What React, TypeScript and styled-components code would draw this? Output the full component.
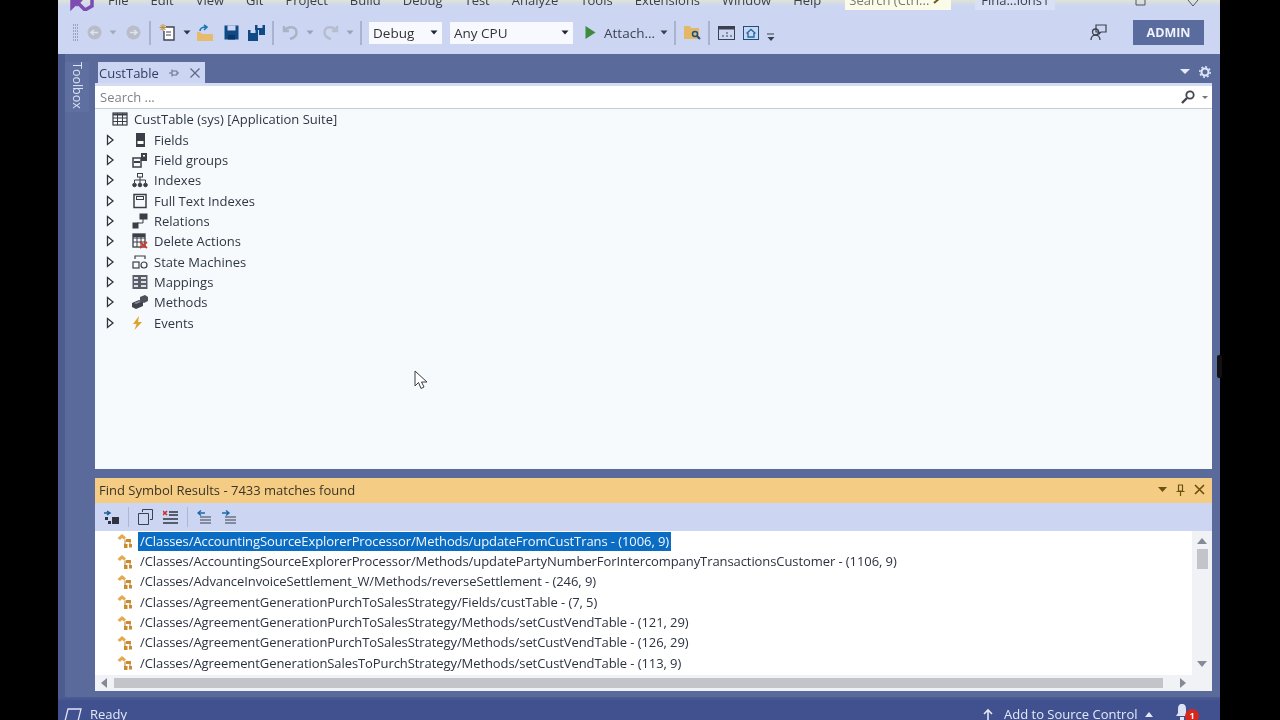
import React from "react";
import styled, { createGlobalStyle } from "styled-components";

const Global = createGlobalStyle`
  html, body { margin: 0; padding: 0; background: #000; overflow: hidden; }
  #root { width: 1280px; height: 720px; }
`;

const Screen = styled.div`
  width: 1280px; height: 720px; background: #000; overflow: hidden; padding-left: 58px; box-sizing: border-box;
  font-family: "Open Sans", "Noto Sans", sans-serif; font-size: 13px; color: #2b2f3a;
`;
const Frame = styled.div`
  position: relative; width: 1162px; height: 720px; display: flex; flex-direction: column; filter: blur(0.35px);
`;
const MenuBar = styled.div`
  height: 11px; flex: none; background: linear-gradient(#dfe4d8, #ccd6f2 6px); display: flex; overflow: hidden; padding-left: 50px; position: relative;
`;
const MenuRow = styled.div`
  display: flex; align-items: center; height: 20px; margin-top: -10px; gap: 22px; color: #3a3f4a;
`;
const Logo = styled.svg`
  position: absolute; left: 12px; top: -6px;
`;
const TitleSearch = styled.div`
  margin-left: 2px; width: 106px; height: 20px; background: #fbfbe9; color: #7a7a70; line-height: 20px; padding-left: 4px; box-sizing: border-box; white-space: nowrap; display: flex; justify-content: space-between; padding-right: 4px;
`;
const TitleProject = styled.div`
  margin-left: 2px; width: 80px; height: 20px; background: #d8e0f6; color: #3a3f4a; line-height: 20px; text-align: center; white-space: nowrap;
`;
const WinIcons = styled.svg`
  position: absolute; left: 1070px; top: 0;
`;
const Toolbar = styled.div`
  height: 43px; flex: none; background: #ccd6f2; display: flex; align-items: center; padding: 0 16px 0 10px; box-sizing: border-box;
`;
const Slot = styled.div<{ $ml?: number; $mt?: number }>`
  width: 16px; height: 20px; flex: none; margin-left: ${p => p.$ml ?? 0}px; margin-top: ${p => p.$mt ?? 0}px; display: flex; align-items: center; justify-content: center;
`;
const Sep = styled.div<{ $ml: number }>`
  width: 2px; height: 24px; flex: none; margin-left: ${p => p.$ml}px; background: #a9b3cf;
`;
const Combo = styled.div<{ $w: number; $ml: number }>`
  width: ${p => p.$w}px; height: 22px; margin-left: ${p => p.$ml}px; flex: none; box-sizing: border-box; background: #f7f9fe;
  display: flex; align-items: center; justify-content: space-between; padding: 0 4px; font-size: 13.5px; color: #333;
`;
const ToolLabel = styled.span<{ $ml: number }>`
  margin-left: ${p => p.$ml}px; width: 50px; flex: none; font-size: 13.5px; white-space: nowrap; color: #3c4252;
`;
const Feedback = styled.svg`
  margin-left: auto; flex: none;
`;
const Admin = styled.div`
  margin-left: 26px; width: 71px; height: 25px; flex: none; background: #5a6b9d; color: #eef2fc; font-weight: 700; font-size: 12.5px;
  display: flex; align-items: center; justify-content: center;
`;
const Workspace = styled.div`
  flex: 1; min-height: 0; background: #5a6a9a; display: flex;
`;
const Side = styled.div`
  width: 37px; flex: none; box-sizing: border-box; border-left: 7px solid #4c5c8e; background: #5a6a9a;
`;
const SideTab = styled.div`
  margin-top: 8px; width: 24px; height: 50px; background: #5f6f9f; color: #dbe3f5; writing-mode: vertical-rl; font-size: 12.5px;
  display: flex; align-items: center; box-sizing: border-box; padding-right: 0; line-height: 21px;
`;
const Main = styled.div`
  width: 1117px; flex: none; display: flex; flex-direction: column;
`;
const TabStrip = styled.div`
  height: 29px; flex: none; display: flex; align-items: flex-end; justify-content: space-between; padding: 0 1px 0 3px;
`;
const DocTab = styled.div`
  width: 107px; height: 21px; background: #ccd6f2; display: flex; align-items: center; padding-left: 1px; box-sizing: border-box; font-size: 13px; color: #2f3d66;
`;
const TabTitle = styled.span`
  width: 69px; flex: none; white-space: nowrap; margin-right: 1px;
`;
const TabClose = styled.svg`
  margin-left: 11px; flex: none;
`;
const StripIcons = styled.div`
  display: flex; align-items: center; gap: 9px; height: 21px; margin-bottom: 1px;
`;
const SearchWrap = styled.div`
  height: 26px; flex: none; background: #d4dcf4; padding-top: 3px; box-sizing: border-box; border-bottom: 1px solid #c8ccd4;
`;
const SearchBox = styled.div`
  height: 22px; background: #fff; display: flex; align-items: center; justify-content: space-between; padding: 0 4px 0 5px; color: #7f828a; font-size: 13px;
`;
const Tree = styled.div`
  height: 360px; flex: none; background: #f6fafd; box-sizing: border-box; position: relative;
`;
const Row = styled.div<{ $root?: boolean }>`
  height: 20.35px; display: flex; align-items: center; padding-left: ${p => (p.$root ? 17 : 10)}px; font-size: 13px; color: #2f3744; white-space: nowrap;
`;
const Arrow = styled.svg`
  flex: none; margin-right: 17px;
`;
const NodeIcon = styled.svg`
  flex: none; margin-right: 6px;
`;
const Pointer = styled.svg`
  position: absolute; left: 319px; top: 261px;
`;
const Splitter = styled.div`
  height: 9px; flex: none;
`;
const Panel = styled.div`
  height: 213px; flex: none; display: flex; flex-direction: column;
`;
const PanelHead = styled.div`
  height: 25px; flex: none; background: #f5cc84; display: flex; align-items: center; justify-content: space-between; padding: 0 7px 2px 4px; box-sizing: border-box; font-size: 13px; color: #3c3425;
`;
const HeadIcons = styled.div<{ $gap: number }>`
  display: flex; align-items: center; gap: ${p => p.$gap}px;
`;
const PanelTools = styled.div`
  height: 28px; flex: none; background: #ccd6f2; display: flex; align-items: center; padding-left: 8px;
`;
const PTool = styled.svg<{ $ml?: number }>`
  flex: none; margin-left: ${p => p.$ml ?? 0}px;
`;
const PSep = styled.div<{ $ml: number }>`
  width: 1px; height: 20px; flex: none; margin-left: ${p => p.$ml}px; background: #aeb7d2;
`;
const ListArea = styled.div`
  flex: 1; min-height: 0; display: flex; background: #fff;
`;
const Rows = styled.div`
  flex: 1; overflow: hidden; padding-left: 22px;
`;
const ResultRow = styled.div`
  height: 20.35px; display: flex; align-items: center; white-space: nowrap; font-size: 13px; letter-spacing: -0.08px; color: #2d3240;
`;
const ResultText = styled.span<{ $sel?: boolean }>`
  margin-left: 5px; padding: 0 2px; height: 19px; line-height: 19px; background: ${p => (p.$sel ? "#0a6cc2" : "transparent")}; color: ${p => (p.$sel ? "#f4f8ff" : "inherit")};
`;
const VScroll = styled.div`
  width: 20px; flex: none; background: #f1f2f5; display: flex; flex-direction: column; align-items: center; padding-top: 7px; box-sizing: border-box;
`;
const VThumb = styled.div`
  width: 11px; height: 20px; background: #c3c4ca; margin-top: 5px;
`;
const VDown = styled.svg`
  margin-top: auto; margin-bottom: 8px;
`;
const HScroll = styled.div`
  height: 16px; flex: none; background: #f1f2f5; display: flex; align-items: center; padding: 0 26px 0 6px;
`;
const HThumb = styled.div`
  width: 1049px; height: 10px; background: #c3c4ca; margin-left: 7px;
`;
const HRight = styled.svg`
  margin-left: auto;
`;
const Gutter = styled.div`
  height: 6px; flex: none; background: #5a6a9a;
`;
const Status = styled.div`
  height: 23px; flex: none; background: linear-gradient(#4d5d93, #41518f 4px); color: #e3e9f8; display: flex; padding-left: 6px; font-size: 13px; overflow: hidden; position: relative;
`;
const StatusIcon = styled.svg<{ $ml?: number; $mt?: number }>`
  margin-top: ${p => p.$mt ?? 11}px; margin-left: ${p => p.$ml ?? 0}px; flex: none;
`;
const StatusText = styled.span<{ $ml: number }>`
  margin-left: ${p => p.$ml}px; line-height: 34px; white-space: nowrap; height: 34px;
`;
const Notch = styled.div`
  position: absolute; left: 1159px; top: 355px; width: 5px; height: 23px; background: #111; border-radius: 2px;
`;
const Badge = styled.div`
  position: absolute; left: 1127px; top: 12px; width: 14px; height: 14px; border-radius: 50%; background: #d9261c; color: #fff; font-size: 9px; font-weight: 700; text-align: center; line-height: 13px;
`;

const S = ({ w = 16, h = 16, children }: { w?: number; h?: number; children: React.ReactNode }) => (
  <svg width={w} height={h} viewBox={`0 0 ${w} ${h}`} style={{ overflow: "visible" }}>{children}</svg>
);
const Drop = ({ c = "#555c6e" }: { c?: string }) => (
  <S w={8} h={5}><path d="M0.5 0.5h7L4 4.5z" fill={c} /></S>
);
const Grip = () => (
  <S w={6} h={16}>
    <path d="M0 0h6M0 3h6M0 6h6M0 9h6M0 12h6M0 15h6" stroke="#6c7386" strokeWidth="1" strokeDasharray="1 1" />
  </S>
);
const Circle = ({ flip }: { flip?: boolean }) => (
  <S w={15} h={15}>
    <circle cx="7.5" cy="7.5" r="7" fill="#b8bdc9" />
    <path d={flip ? "M4 7.5h7M8 5l3 2.5-3 2.5" : "M11 7.5H4M7 5L4 7.5 7 10"} stroke="#dfe3ee" strokeWidth="1.5" fill="none" />
  </S>
);

const PanelIcon = () => (
  <svg width="16" height="16" viewBox="0 0 16 16">
    <path d="M0.500 5L5 1l4 3.500-2 2L5 5 3 7z" fill="#e3a94c" />
    <path d="M9 6h5v3H9zM7 11h3.500v4H7zM12 11h3v3.500h-3z" fill="#cc8a2e" />
    <path d="M8 6.500V11M13 9v2" stroke="#b97c25" fill="none" />
  </svg>
);

const nodes: [string, React.ReactNode][] = [
  ["Fields", <g key="a"><rect x="4" y="1" width="9" height="14" fill="#3b3f47" /><rect x="5.500" y="9" width="6" height="3" fill="#fff" /></g>],
  ["Field groups", <g key="b"><rect x="1" y="6" width="8" height="9" fill="none" stroke="#3b3f47" strokeWidth="1.500" /><path d="M2 10h6" stroke="#3b3f47" strokeWidth="2" /><rect x="9" y="1" width="6" height="8" fill="#3b3f47" /><path d="M11 3h2v1.500h-2z" fill="#fff" /></g>],
  ["Indexes", <g key="c" fill="none" stroke="#3b3f47"><rect x="5.500" y="1.500" width="5" height="3.500" /><path d="M8 5v3M2.500 11V8h11v3M8 8v3" /><circle cx="2.500" cy="13" r="1.800" fill="#3b3f47" /><circle cx="8" cy="13" r="1.800" fill="#3b3f47" /><circle cx="13.500" cy="13" r="1.800" fill="#3b3f47" /></g>],
  ["Full Text Indexes", <g key="d" fill="none" stroke="#3b3f47" strokeWidth="1.500"><rect x="2" y="1.500" width="12" height="13" /><rect x="4.500" y="3.500" width="7" height="3" strokeWidth="1" /></g>],
  ["Relations", <g key="e" fill="none" stroke="#3b3f47"><rect x="8" y="1" width="7" height="5" fill="#3b3f47" /><path d="M11 6v4H5" /><rect x="1" y="10" width="5" height="5" fill="#3b3f47" /></g>],
  ["Delete Actions", <g key="f"><rect x="1" y="1" width="12" height="13" fill="none" stroke="#3b3f47" strokeWidth="1.300" /><path d="M1 5h12M1 9h12M5 1v13M9 1v13" stroke="#3b3f47" /><rect x="1" y="1" width="12" height="3" fill="#3b3f47" /><path d="M8 9l7 6M15 9l-7 6" stroke="#d2392e" strokeWidth="1.800" /></g>],
  ["State Machines", <g key="g" fill="none" stroke="#3b3f47" strokeWidth="1.200"><path d="M3 5V2h10v3" /><rect x="1" y="8" width="6" height="6" /><circle cx="12" cy="11" r="3" /></g>],
  ["Mappings", <g key="h"><rect x="0.500" y="1" width="15" height="14" fill="#5a5e68" /><path d="M2 3h4v2H2zM9 3h5v2H9zM2 7h4v2H2zM9 7h5v2H9zM2 11h4v2H2zM9 11h5v2H9z" fill="#dde0e6" /></g>],
  ["Methods", <g key="i" fill="#3f434c"><path d="M0 9l7-3 4 2v4l-7 3-4-2z" /><path d="M8 3l5-2 3 2v4l-4 2-4-2z" fill="#4d515b" /><path d="M2 9l5-2 2 1-5 2z" fill="#878b95" /></g>],
  ["Events", <path key="j" d="M7 1L1 9h3.500l-2 6L10 7H6z" fill="#e2a02d" />],
];

const results = [
  "/Classes/AccountingSourceExplorerProcessor/Methods/updateFromCustTrans - (1006, 9)",
  "/Classes/AccountingSourceExplorerProcessor/Methods/updatePartyNumberForIntercompanyTransactionsCustomer - (1106, 9)",
  "/Classes/AdvanceInvoiceSettlement_W/Methods/reverseSettlement - (246, 9)",
  "/Classes/AgreementGenerationPurchToSalesStrategy/Fields/custTable - (7, 5)",
  "/Classes/AgreementGenerationPurchToSalesStrategy/Methods/setCustVendTable - (121, 29)",
  "/Classes/AgreementGenerationPurchToSalesStrategy/Methods/setCustVendTable - (126, 29)",
  "/Classes/AgreementGenerationSalesToPurchStrategy/Methods/setCustVendTable - (113, 9)",
];

const menus = ["File", "Edit", "View", "Git", "Project", "Build", "Debug", "Test", "Analyze", "Tools", "Extensions", "Window", "Help"];

export default function App() {
  return (
    <Screen>
      <Global />
      <Frame>
        <MenuBar>
          <Logo width="24" height="18" viewBox="0 0 24 18"><path d="M2 4l5 6 8-9 7 3v8l-7 4-8-8-5 5z" fill="none" stroke="#7e4bb0" strokeWidth="3.500" /></Logo>
          <MenuRow>
            {menus.map(m => <span key={m}>{m}</span>)}
            <TitleSearch>
              Search (Ctrl...
              <S w={14} h={14}><circle cx="10" cy="5" r="3" fill="none" stroke="#6a5a20" strokeWidth="2" /><path d="M7 8l-6 5" stroke="#6a5a20" strokeWidth="2" /></S>
            </TitleSearch>
            <TitleProject>Fina...ions1</TitleProject>
          </MenuRow>
          <WinIcons width="80" height="11" viewBox="0 0 80 11">
            <path d="M8 0v5h9V0M11 0v-1" fill="none" stroke="#555" />
            <path d="M60 0l5 6 5-6" fill="none" stroke="#555" />
          </WinIcons>
        </MenuBar>
        <Toolbar>
          <Slot><Grip /></Slot>
          <Slot $ml={2}><Circle /></Slot>
          <Slot $ml={3}><Drop c="#a3a9b8" /></Slot>
          <Slot $ml={4}><Circle flip /></Slot>
          <Sep $ml={8} />
          <Slot $ml={8}>
            <S w={17} h={17}>
              <path d="M7 3h8v13H5V7" fill="#fff" stroke="#3f4552" strokeWidth="1.400" />
              <path d="M7 8h5M7 11h5" stroke="#3f4552" />
              <path d="M4 0v7M0.500 3.500h7M1.500 1l5 5M6.500 1l-5 5" stroke="#c98d31" />
            </S>
          </Slot>
          <Slot $ml={4}><Drop c="#2f3542" /></Slot>
          <Slot $ml={2}>
            <S w={18} h={16}>
              <path d="M1 7h3l2 2h11v7H1z" fill="#e7bb6c" />
              <path d="M4 6c0-3 3-4 6-4M8 0l3 2-3 3" fill="none" stroke="#1c77b5" strokeWidth="1.600" />
            </S>
          </Slot>
          <Slot $ml={10}>
            <S w={15} h={15}>
              <path d="M0.500 0.500h14v14h-14z" fill="#0f4a86" />
              <path d="M3.500 0.500h8v5h-8z" fill="#ccd6f2" />
              <path d="M4 10h7v4.500H4z" fill="#0a3766" />
            </S>
          </Slot>
          <Slot $ml={9}>
            <S w={17} h={16}>
              <path d="M0 5h10v11H0zM7 0h10v10h-6V5H7z" fill="#0f4a86" />
              <path d="M2.500 5h5v3h-5zM9.500 0h5v3h-5z" fill="#ccd6f2" />
            </S>
          </Slot>
          <Sep $ml={8} />
          <Slot $ml={8}>
            <S w={15} h={17}>
              <path d="M1 2v5h5M1.500 6.500C5 2 13 2 13.500 8c.3 4-3 6-6.500 7" fill="none" stroke="#aab2c4" strokeWidth="2.400" />
            </S>
          </Slot>
          <Slot $ml={4}><Drop c="#9aa1b2" /></Slot>
          <Slot $ml={4}>
            <S w={15} h={17}>
              <path d="M14 2v5H9M13.500 6.500C10 2 2 2 1.500 8c-.3 4 3 6 6.500 7" fill="none" stroke="#b6bdcd" strokeWidth="2.400" />
            </S>
          </Slot>
          <Slot $ml={4}><Drop c="#9aa1b2" /></Slot>
          <Sep $ml={2} />
          <Combo $w={73} $ml={7}>Debug<Drop c="#22262f" /></Combo>
          <Combo $w={123} $ml={8}>Any CPU<Drop c="#22262f" /></Combo>
          <Slot $ml={9}><S w={11} h={13}><path d="M0.500 0L10.500 6.500L0.500 13z" fill="#3d8b3d" /></S></Slot>
          <ToolLabel $ml={6}>Attach...</ToolLabel>
          <Slot $ml={2}><Drop c="#3a3f4d" /></Slot>
          <Sep $ml={2} />
          <Slot $ml={8}>
            <S w={17} h={15}>
              <path d="M0 1h6l1 2h8v11H0z" fill="#e3b866" />
              <circle cx="11" cy="9" r="2.500" fill="none" stroke="#1d4f86" strokeWidth="1.500" />
              <path d="M13 11l3 3" stroke="#1d4f86" strokeWidth="2" />
            </S>
          </Slot>
          <Sep $ml={8} />
          <Slot $ml={8}>
            <S w={17} h={14}>
              <rect x="0.500" y="0.500" width="16" height="13" fill="none" stroke="#3b4150" />
              <rect x="0.500" y="0.500" width="16" height="3" fill="#3b4150" />
              <path d="M4 10h2M8 10h2M12 10h2M8 7h2" stroke="#3b4150" />
            </S>
          </Slot>
          <Slot $ml={9}>
            <S w={16} h={14}>
              <rect x="0.500" y="0.500" width="15" height="13" fill="none" stroke="#1d4f7d" />
              <path d="M3.500 7.500L8 3.500l4.500 4M5 7v4h6V7" fill="none" stroke="#1d6fa8" strokeWidth="1.400" />
            </S>
          </Slot>
          <Slot $ml={4} $mt={8}><S w={8} h={8}><path d="M0 1h7" stroke="#3a3f4d" /><path d="M0.500 4h7L4 8z" fill="#3a3f4d" /></S></Slot>
          <Feedback width="17" height="17" viewBox="0 0 17 17">
            <path d="M6 1h10v7h-5l-2 2V8H6z" fill="none" stroke="#3c424f" strokeWidth="1.200" />
            <circle cx="5.500" cy="8" r="3" fill="none" stroke="#3c424f" strokeWidth="1.300" />
            <path d="M1 16c0-3 2-5 4.500-5s4.500 2 4.500 5" fill="none" stroke="#3c424f" strokeWidth="1.300" />
          </Feedback>
          <Admin>ADMIN</Admin>
        </Toolbar>
        <Workspace>
          <Side><SideTab>Toolbox</SideTab></Side>
          <Main>
            <TabStrip>
              <DocTab>
                <TabTitle>CustTable</TabTitle>
                <S w={10} h={10}><path d="M3 1.500v7M3 3h5v4H3M0 5h3M8 5h2" fill="none" stroke="#64708f" /></S>
                <TabClose width="10" height="10" viewBox="0 0 10 10"><path d="M0.500 0.500l9 9M9.500 0.500l-9 9" stroke="#5d6a8c" strokeWidth="1.300" /></TabClose>
              </DocTab>
              <StripIcons>
                <S w={10} h={5}><path d="M0 0h10L5 5z" fill="#e4ebfa" /></S>
                <S w={12} h={12}>
                  <circle cx="6" cy="6" r="3.500" fill="none" stroke="#dfe7f8" strokeWidth="2" />
                  <circle cx="6" cy="6" r="5.200" fill="none" stroke="#dfe7f8" strokeWidth="1.500" strokeDasharray="2 2" />
                </S>
              </StripIcons>
            </TabStrip>
            <SearchWrap>
              <SearchBox>
                <span>Search ...</span>
                <HeadIcons $gap={7}>
                  <S w={14} h={14}>
                    <circle cx="9" cy="5" r="3.700" fill="none" stroke="#42464f" strokeWidth="1.800" />
                    <path d="M6 8l-5 5" stroke="#42464f" strokeWidth="2.400" />
                  </S>
                  <S w={6} h={3}><path d="M0 0h6L3 3z" fill="#777" /></S>
                </HeadIcons>
              </SearchBox>
            </SearchWrap>
            <Tree>
              <Row $root>
                <NodeIcon width="16" height="16" viewBox="0 0 16 16">
                  <rect x="1" y="2" width="14" height="12" fill="none" stroke="#3b3f47" strokeWidth="1.200" />
                  <path d="M1 3.500h14" stroke="#3b3f47" strokeWidth="2" />
                  <path d="M1 7h14M1 10.500h14M5.500 2v12M10.500 2v12" stroke="#3b3f47" />
                </NodeIcon>
                CustTable (sys) [Application Suite]
              </Row>
              {nodes.map(([label, icon]) => (
                <Row key={label}>
                  <Arrow width="10" height="12" viewBox="0 0 10 12"><path d="M2.500 1.500L8 6l-5.500 4.500z" fill="#fff" stroke="#2f333c" strokeWidth="1.300" /></Arrow>
                  <NodeIcon width="16" height="16" viewBox="0 0 16 16">{icon}</NodeIcon>
                  {label}
                </Row>
              ))}
              <Pointer width="14" height="21" viewBox="0 0 14 21">
                <path d="M1 1v15l3.500-3.500L7 18.500l3-1.500-2.500-5H13z" fill="#fff" stroke="#3a3d44" strokeWidth="1" />
              </Pointer>
            </Tree>
            <Splitter />
            <Panel>
              <PanelHead>
                <span>Find Symbol Results - 7433 matches found</span>
                <HeadIcons $gap={9}>
                  <S w={9} h={5}><path d="M0 0h9L4.500 5z" fill="#6c5212" /></S>
                  <S w={9} h={12}><path d="M2.500 1h4v6h-4zM0.500 7.500h8M4.500 8v4" fill="none" stroke="#6c5212" strokeWidth="1.200" /></S>
                  <S w={11} h={11}><path d="M1 1l9 9M10 1l-9 9" stroke="#6c5212" strokeWidth="1.700" /></S>
                </HeadIcons>
              </PanelHead>
              <PanelTools>
                <PTool width="17" height="15" viewBox="0 0 17 15">
                  <path d="M1 3h5M4 1l3 2-3 2" fill="none" stroke="#1d5f96" strokeWidth="1.500" />
                  <rect x="9" y="7" width="7" height="7" fill="#2d3340" />
                  <path d="M2 7h3v3H2zM5 11h3v3H5z" fill="#2d3340" />
                </PTool>
                <PSep $ml={8} />
                <PTool $ml={9} width="15" height="16" viewBox="0 0 15 16">
                  <path d="M4.500 3V0.500h10v10H12M0.500 4.500h10v11h-10z" fill="none" stroke="#3a4050" />
                </PTool>
                <PTool $ml={10} width="15" height="15" viewBox="0 0 15 15">
                  <path d="M6 2h9M6 5h9M0 9h15M0 13h15" stroke="#30353f" strokeWidth="1.600" />
                  <path d="M0 1l4 4M4 1L0 5" stroke="#d0322a" strokeWidth="1.600" />
                </PTool>
                <PSep $ml={9} />
                <PTool $ml={9} width="14" height="14" viewBox="0 0 14 14">
                  <path d="M8 3H1M4 0.500L1 3l3 2.500" fill="none" stroke="#1d6aa5" strokeWidth="1.400" />
                  <path d="M3 7h11M3 10h11M3 13h11" stroke="#3b404c" />
                </PTool>
                <PTool $ml={11} width="14" height="14" viewBox="0 0 14 14">
                  <path d="M0 3h7M4 0.500L7 3 4 5.500" fill="none" stroke="#1d6aa5" strokeWidth="1.400" />
                  <path d="M3 7h11M3 10h11M3 13h11" stroke="#3b404c" />
                </PTool>
              </PanelTools>
              <ListArea>
                <Rows>
                  {results.map((r, i) => (
                    <ResultRow key={r}>
                      <PanelIcon />
                      <ResultText $sel={i === 0}>{r}</ResultText>
                    </ResultRow>
                  ))}
                </Rows>
                <VScroll>
                  <S w={10} h={6}><path d="M5 0l5 6H0z" fill="#858a96" /></S>
                  <VThumb />
                  <VDown width="10" height="6" viewBox="0 0 10 6"><path d="M0 0h10L5 6z" fill="#858a96" /></VDown>
                </VScroll>
              </ListArea>
              <HScroll>
                <S w={6} h={10}><path d="M6 0v10L0 5z" fill="#858a96" /></S>
                <HThumb />
                <HRight width="6" height="10" viewBox="0 0 6 10"><path d="M0 0v10l6-5z" fill="#858a96" /></HRight>
              </HScroll>
            </Panel>
            <Gutter />
          </Main>
        </Workspace>
        <Status>
          <StatusIcon width="18" height="14" viewBox="0 0 18 14"><path d="M4 1h13l-3 12H1z" fill="none" stroke="#dfe5f5" strokeWidth="1.300" /></StatusIcon>
          <StatusText $ml={8}>Ready</StatusText>
          <StatusIcon $ml={855} width="12" height="12" viewBox="0 0 12 12"><path d="M6 12V2M2 6l4-4 4 4" fill="none" stroke="#e3e9f8" strokeWidth="1.600" /></StatusIcon>
          <StatusText $ml={10}>Add to Source Control</StatusText>
          <StatusIcon $ml={7} $mt={15} width="8" height="5" viewBox="0 0 8 5"><path d="M0 5h8L4 0z" fill="#e3e9f8" /></StatusIcon>
          <StatusIcon $ml={22} $mt={7} width="14" height="16" viewBox="0 0 14 16"><path d="M7 0c3 0 4 2 4 5v4l2 3H1l2-3V5c0-3 1-5 4-5zM5 13h4v3H5z" fill="#dce3f4" /></StatusIcon>
          <Badge>1</Badge>
        </Status>
        <Notch />
      </Frame>
    </Screen>
  );
}
